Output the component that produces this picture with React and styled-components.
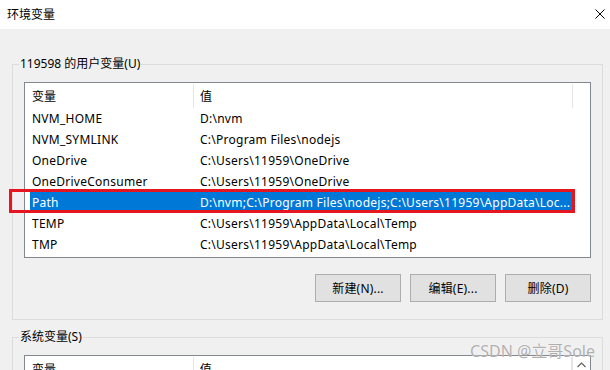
import React from 'react';
import styled, { createGlobalStyle } from 'styled-components';

const GlobalStyle = createGlobalStyle`
  html, body {
    margin: 0;
    width: 610px;
    height: 370px;
    overflow: hidden;
    background: #f0f0f0;
  }
  body {
    font-family: "Noto Sans", "Noto Sans CJK SC", sans-serif;
    font-size: 12px;
    color: #000;
  }
`;

const Window = styled.div`
  position: relative;
  width: 610px;
  height: 370px;
  overflow: hidden;
  background: #f0f0f0;
`;

const TitleBar = styled.div`
  height: 29px;
  background: #fff;
  display: flex;
  align-items: center;
  justify-content: space-between;
  padding: 0 5px 1px 7px;
  box-sizing: border-box;
`;

const Title = styled.span`
  font-family: "Noto Sans CJK SC", sans-serif;
  font-size: 12px;
  line-height: 16px;
`;

const CloseIcon = styled.svg`
  width: 10px;
  height: 10px;
  display: block;
`;

const Group = styled.fieldset`
  margin: ${p => p.$top}px 7px 0 12px;
  padding: 10px 11px 0 11px;
  border: 1px solid #dcdcdc;
  min-width: 0;
  box-sizing: border-box;
  height: ${p => p.$height}px;
`;

const Legend = styled.legend`
  padding: 0 1px;
  margin-left: -5px;
  line-height: 16px;
  font-family: "Noto Sans", "Noto Sans CJK SC", sans-serif;
`;

const ListBox = styled.div`
  border: 1px solid #828790;
  background: #fff;
  height: ${p => p.$height}px;
  box-sizing: border-box;
  display: flex;
`;

const ListInner = styled.div`
  flex: 1;
  min-width: 0;
  padding-left: 5px;
`;

const HeaderRow = styled.div`
  display: flex;
  height: 25px;
`;

const HeaderCell = styled.div`
  width: ${p => p.$width}px;
  box-sizing: border-box;
  margin-top: 1px;
  padding-left: ${p => p.$pad}px;
  padding-top: 4px;
  line-height: 16px;
  border-right: 1px solid #e5e5e5;
  font-family: "Noto Sans CJK SC", sans-serif;
`;

const Row = styled.div`
  position: relative;
  display: flex;
  width: 542px;
  height: 21px;
  line-height: 21px;
  letter-spacing: 0.25px;
  background: ${p => (p.$selected ? '#0078d7' : 'transparent')};
  color: ${p => (p.$selected ? '#fff' : '#000')};
`;

const Cell = styled.div`
  width: ${p => p.$width}px;
  box-sizing: border-box;
  padding-left: ${p => p.$pad}px;
  white-space: nowrap;
  overflow: hidden;
`;

const Highlight = styled.div`
  position: absolute;
  left: -21px;
  top: -3px;
  width: 566px;
  height: 24px;
  border: 3px solid #e5161f;
  box-sizing: border-box;
  pointer-events: none;
`;

const ButtonRow = styled.div`
  display: flex;
  justify-content: flex-end;
  gap: 9px;
  margin-top: 16px;
`;

const Button = styled.button`
  width: 86px;
  height: 28px;
  background: #e1e1e1;
  border: 1px solid #adadad;
  font-family: "Noto Sans", "Noto Sans CJK SC", sans-serif;
  font-size: 12px;
  letter-spacing: 0.2px;
  color: #000;
  padding: 0;
  margin: 0;
`;

const ScrollBar = styled.div`
  width: 17px;
  border-left: 1px solid #e5e5e5;
  display: flex;
  justify-content: center;
  padding-top: 6px;
`;

const Watermark = styled.div`
  position: absolute;
  right: 15px;
  top: 340px;
  font-family: "Noto Sans", "Noto Sans CJK SC", sans-serif;
  font-size: 16px;
  line-height: 22px;
  color: rgba(150, 150, 150, 0.75);
  text-shadow: 0 0 1px #fff;
  white-space: nowrap;
`;

const userVars = [
  ['NVM_HOME', 'D:\\nvm'],
  ['NVM_SYMLINK', 'C:\\Program Files\\nodejs'],
  ['OneDrive', 'C:\\Users\\11959\\OneDrive'],
  ['OneDriveConsumer', 'C:\\Users\\11959\\OneDrive'],
  ['Path', 'D:\\nvm;C:\\Program Files\\nodejs;C:\\Users\\11959\\AppData\\Loc...'],
  ['TEMP', 'C:\\Users\\11959\\AppData\\Local\\Temp'],
  ['TMP', 'C:\\Users\\11959\\AppData\\Local\\Temp']
];

function Header({ valueWidth }) {
  return (
    <HeaderRow>
      <HeaderCell $width={164} $pad={2}>变量</HeaderCell>
      <HeaderCell $width={valueWidth} $pad={6}>值</HeaderCell>
    </HeaderRow>
  );
}

export default function App() {
  return (
    <Window>
      <GlobalStyle />
      <TitleBar>
        <Title>环境变量</Title>
        <CloseIcon viewBox="0 0 10 10">
          <path d="M0.5 0.5 L9.5 9.5 M9.5 0.5 L0.5 9.5" stroke="#000" strokeWidth="1" fill="none" />
        </CloseIcon>
      </TitleBar>

      <Group $top={27} $height={264}>
        <Legend>119598 的用户变量(U)</Legend>
        <ListBox $height={176}>
          <ListInner>
            <Header valueWidth={379} />
            {userVars.map(([name, value]) => {
              const selected = name === 'Path';
              return (
                <Row key={name} $selected={selected}>
                  <Cell $width={164} $pad={2}>{name}</Cell>
                  <Cell $width={378} $pad={6}>{value}</Cell>
                  {selected && <Highlight />}
                </Row>
              );
            })}
          </ListInner>
        </ListBox>
        <ButtonRow>
          <Button>新建(N)...</Button>
          <Button>编辑(E)...</Button>
          <Button>删除(D)</Button>
        </ButtonRow>
      </Group>

      <Group $top={9} $height={120}>
        <Legend>系统变量(S)</Legend>
        <ListBox $height={120}>
          <ListInner>
            <Header valueWidth={379} />
          </ListInner>
          <ScrollBar>
            <svg width="9" height="6" viewBox="0 0 9 6">
              <path d="M0.5 5 L4.5 1 L8.5 5" stroke="#606060" strokeWidth="1.2" fill="none" />
            </svg>
          </ScrollBar>
        </ListBox>
      </Group>

      <Watermark>CSDN @立哥Sole</Watermark>
    </Window>
  );
}
